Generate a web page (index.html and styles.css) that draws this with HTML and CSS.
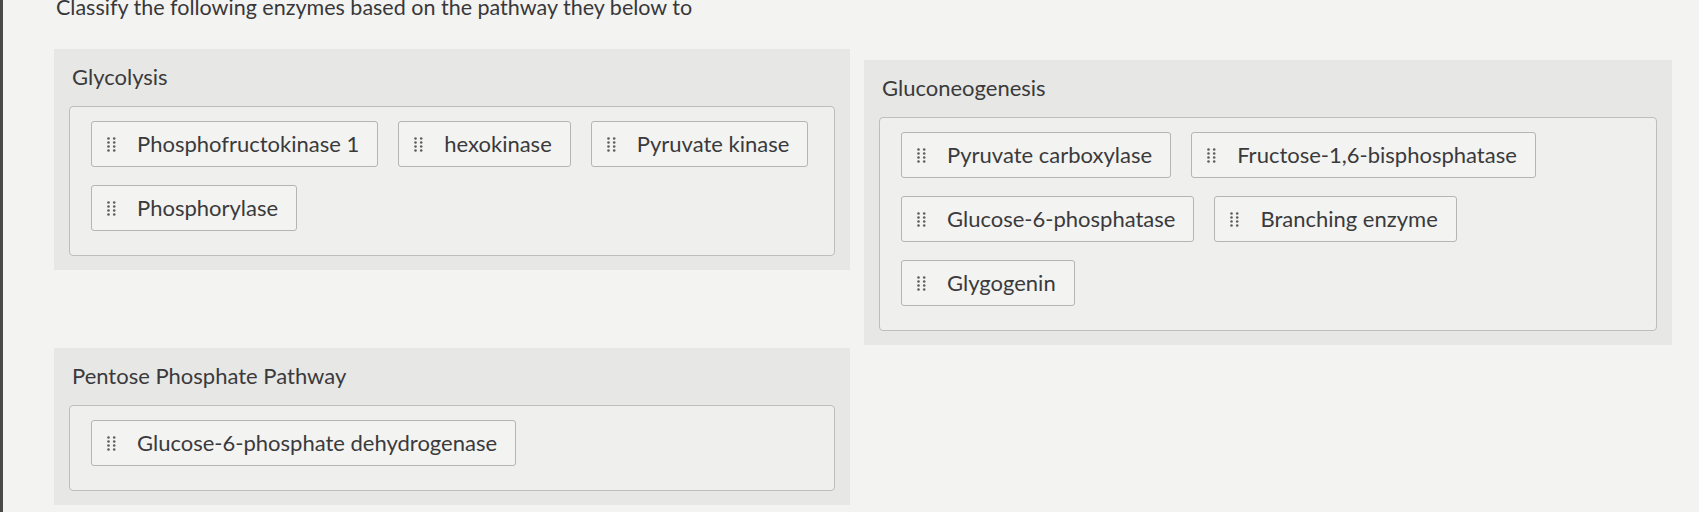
FILE: index.html
```html
<!DOCTYPE html>
<html lang="en">
<head>
<meta charset="utf-8">
<title>Classify enzymes</title>
<link rel="stylesheet" href="styles.css">
</head>
<body>
<div class="page">
  <p class="prompt">Classify the following enzymes based on the pathway they below to</p>
  <div class="grid">
    <section class="panel glyco">
      <h2 class="label">Glycolysis</h2>
      <div class="dropzone">
        <div class="chip"><svg class="handle" viewBox="0 0 9 15" width="9" height="15"><g fill="currentColor"><circle cx="1.5" cy="1.5" r="1.3"/><circle cx="7.2" cy="1.5" r="1.3"/><circle cx="1.5" cy="5.5" r="1.3"/><circle cx="7.2" cy="5.5" r="1.3"/><circle cx="1.5" cy="9.5" r="1.3"/><circle cx="7.2" cy="9.5" r="1.3"/><circle cx="1.5" cy="13.5" r="1.3"/><circle cx="7.2" cy="13.5" r="1.3"/></g></svg><span>Phosphofructokinase 1</span></div>
        <div class="chip"><svg class="handle" viewBox="0 0 9 15" width="9" height="15"><g fill="currentColor"><circle cx="1.5" cy="1.5" r="1.3"/><circle cx="7.2" cy="1.5" r="1.3"/><circle cx="1.5" cy="5.5" r="1.3"/><circle cx="7.2" cy="5.5" r="1.3"/><circle cx="1.5" cy="9.5" r="1.3"/><circle cx="7.2" cy="9.5" r="1.3"/><circle cx="1.5" cy="13.5" r="1.3"/><circle cx="7.2" cy="13.5" r="1.3"/></g></svg><span>hexokinase</span></div>
        <div class="chip"><svg class="handle" viewBox="0 0 9 15" width="9" height="15"><g fill="currentColor"><circle cx="1.5" cy="1.5" r="1.3"/><circle cx="7.2" cy="1.5" r="1.3"/><circle cx="1.5" cy="5.5" r="1.3"/><circle cx="7.2" cy="5.5" r="1.3"/><circle cx="1.5" cy="9.5" r="1.3"/><circle cx="7.2" cy="9.5" r="1.3"/><circle cx="1.5" cy="13.5" r="1.3"/><circle cx="7.2" cy="13.5" r="1.3"/></g></svg><span>Pyruvate kinase</span></div>
        <div class="chip"><svg class="handle" viewBox="0 0 9 15" width="9" height="15"><g fill="currentColor"><circle cx="1.5" cy="1.5" r="1.3"/><circle cx="7.2" cy="1.5" r="1.3"/><circle cx="1.5" cy="5.5" r="1.3"/><circle cx="7.2" cy="5.5" r="1.3"/><circle cx="1.5" cy="9.5" r="1.3"/><circle cx="7.2" cy="9.5" r="1.3"/><circle cx="1.5" cy="13.5" r="1.3"/><circle cx="7.2" cy="13.5" r="1.3"/></g></svg><span>Phosphorylase</span></div>
      </div>
    </section>
    <section class="panel gluco">
      <h2 class="label">Gluconeogenesis</h2>
      <div class="dropzone">
        <div class="chip"><svg class="handle" viewBox="0 0 9 15" width="9" height="15"><g fill="currentColor"><circle cx="1.5" cy="1.5" r="1.3"/><circle cx="7.2" cy="1.5" r="1.3"/><circle cx="1.5" cy="5.5" r="1.3"/><circle cx="7.2" cy="5.5" r="1.3"/><circle cx="1.5" cy="9.5" r="1.3"/><circle cx="7.2" cy="9.5" r="1.3"/><circle cx="1.5" cy="13.5" r="1.3"/><circle cx="7.2" cy="13.5" r="1.3"/></g></svg><span>Pyruvate carboxylase</span></div>
        <div class="chip"><svg class="handle" viewBox="0 0 9 15" width="9" height="15"><g fill="currentColor"><circle cx="1.5" cy="1.5" r="1.3"/><circle cx="7.2" cy="1.5" r="1.3"/><circle cx="1.5" cy="5.5" r="1.3"/><circle cx="7.2" cy="5.5" r="1.3"/><circle cx="1.5" cy="9.5" r="1.3"/><circle cx="7.2" cy="9.5" r="1.3"/><circle cx="1.5" cy="13.5" r="1.3"/><circle cx="7.2" cy="13.5" r="1.3"/></g></svg><span>Fructose-1,6-bisphosphatase</span></div>
        <div class="chip"><svg class="handle" viewBox="0 0 9 15" width="9" height="15"><g fill="currentColor"><circle cx="1.5" cy="1.5" r="1.3"/><circle cx="7.2" cy="1.5" r="1.3"/><circle cx="1.5" cy="5.5" r="1.3"/><circle cx="7.2" cy="5.5" r="1.3"/><circle cx="1.5" cy="9.5" r="1.3"/><circle cx="7.2" cy="9.5" r="1.3"/><circle cx="1.5" cy="13.5" r="1.3"/><circle cx="7.2" cy="13.5" r="1.3"/></g></svg><span>Glucose-6-phosphatase</span></div>
        <div class="chip"><svg class="handle" viewBox="0 0 9 15" width="9" height="15"><g fill="currentColor"><circle cx="1.5" cy="1.5" r="1.3"/><circle cx="7.2" cy="1.5" r="1.3"/><circle cx="1.5" cy="5.5" r="1.3"/><circle cx="7.2" cy="5.5" r="1.3"/><circle cx="1.5" cy="9.5" r="1.3"/><circle cx="7.2" cy="9.5" r="1.3"/><circle cx="1.5" cy="13.5" r="1.3"/><circle cx="7.2" cy="13.5" r="1.3"/></g></svg><span>Branching enzyme</span></div>
        <div class="chip"><svg class="handle" viewBox="0 0 9 15" width="9" height="15"><g fill="currentColor"><circle cx="1.5" cy="1.5" r="1.3"/><circle cx="7.2" cy="1.5" r="1.3"/><circle cx="1.5" cy="5.5" r="1.3"/><circle cx="7.2" cy="5.5" r="1.3"/><circle cx="1.5" cy="9.5" r="1.3"/><circle cx="7.2" cy="9.5" r="1.3"/><circle cx="1.5" cy="13.5" r="1.3"/><circle cx="7.2" cy="13.5" r="1.3"/></g></svg><span>Glygogenin</span></div>
      </div>
    </section>
    <section class="panel pentose">
      <h2 class="label">Pentose Phosphate Pathway</h2>
      <div class="dropzone">
        <div class="chip"><svg class="handle" viewBox="0 0 9 15" width="9" height="15"><g fill="currentColor"><circle cx="1.5" cy="1.5" r="1.3"/><circle cx="7.2" cy="1.5" r="1.3"/><circle cx="1.5" cy="5.5" r="1.3"/><circle cx="7.2" cy="5.5" r="1.3"/><circle cx="1.5" cy="9.5" r="1.3"/><circle cx="7.2" cy="9.5" r="1.3"/><circle cx="1.5" cy="13.5" r="1.3"/><circle cx="7.2" cy="13.5" r="1.3"/></g></svg><span>Glucose-6-phosphate dehydrogenase</span></div>
      </div>
    </section>
  </div>
</div>
</body>
</html>
```

FILE: styles.css
```css
html, body {
  margin: 0;
  padding: 0;
}

body {
  background: #f3f3f1;
  border-left: 3px solid #4a4a4a;
  height: 512px;
  box-sizing: border-box;
  overflow: hidden;
  font-family: Lato, "Open Sans", sans-serif;
  color: #3a3a3c;
}

.page {
  padding-left: 51px;
}

.prompt {
  margin: -5px 0 30px 2px;
  font-size: 21.5px;
  line-height: 24px;
  color: #38383a;
}

.grid {
  display: grid;
  grid-template-columns: 796px 808px;
  column-gap: 14px;
  align-items: start;
}

.panel {
  background: #e7e7e5;
  padding: 16px 15px 14px;
}

.glyco {
  grid-column: 1;
  grid-row: 1;
}

.gluco {
  grid-column: 2;
  grid-row: 1 / span 2;
  margin-top: 11px;
}

.pentose {
  grid-column: 1;
  grid-row: 2;
  margin-top: 78px;
}

.label {
  margin: 0 0 17px 3px;
  font-size: 22px;
  font-weight: 400;
  line-height: 24px;
  color: #3a3a3c;
}

.dropzone {
  display: flex;
  flex-wrap: wrap;
  gap: 18px 20px;
  padding: 14px 10px 24px 21px;
  background: #efefed;
  border: 1px solid #bdbdbb;
  border-radius: 4px;
}

.chip {
  display: flex;
  align-items: center;
  padding: 10px 18px 10px 15px;
  background: #f3f3f1;
  border: 1px solid #b5b5b3;
  border-radius: 3px;
  font-size: 22px;
  line-height: 24px;
  color: #3a3a3c;
}

.handle {
  color: #5e5e60;
  margin-right: 21px;
  flex: none;
}
```
